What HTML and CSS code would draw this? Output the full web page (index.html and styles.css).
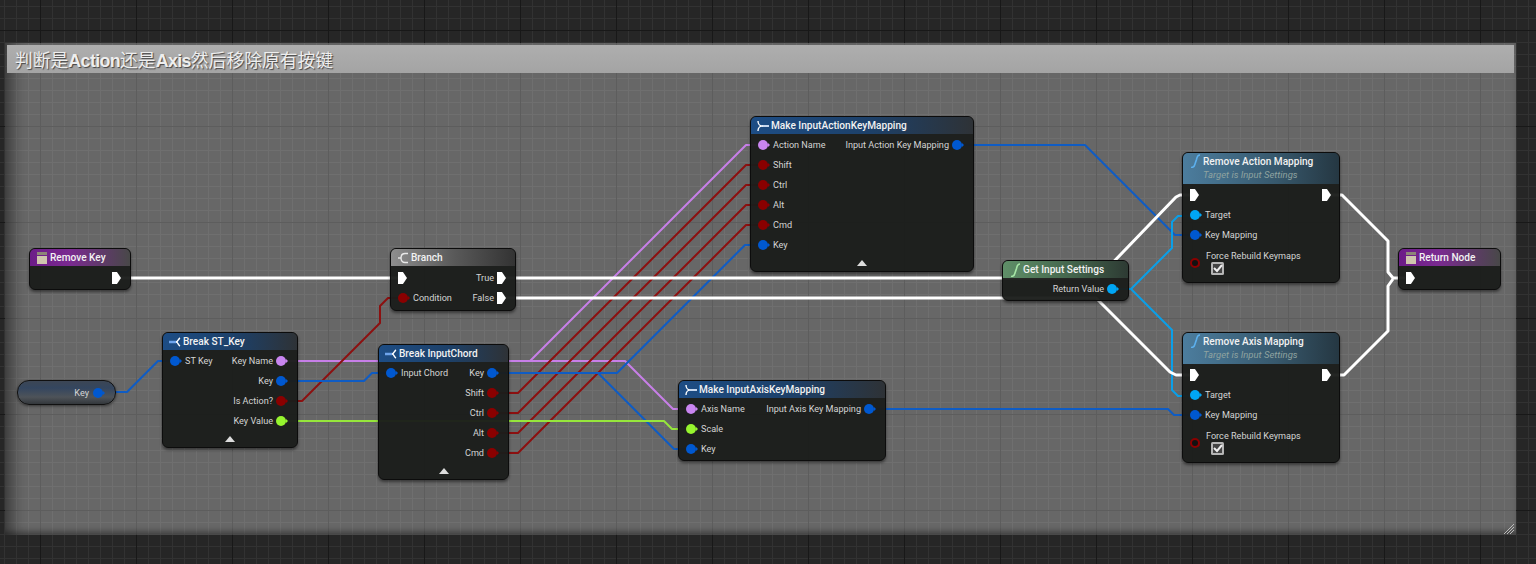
FILE: index.html
```html
<!DOCTYPE html>
<html lang="zh">
<head>
  <meta charset="UTF-8">
  <title>Blueprint</title>
  <link rel="stylesheet" href="styles.css">
</head>
<body>
  <div class="canvas">
    <div class="comment">
      <div class="comment-title">判断是<b>Action</b>还是<b>Axis</b>然后移除原有按键</div>
      <svg class="grip" width="10" height="10" viewBox="0 0 10 10"><path d="M0 10L10 0M3 10L10 3M6 10L10 6" stroke="#bbb" stroke-width="1"/></svg>
    </div>

    <svg class="wires" width="1536" height="564" viewBox="0 0 1536 564" fill="none" stroke-linejoin="round">
      <!-- data wires -->
      <g stroke-width="2">
        <path stroke="#c77fe8" d="M281 361H625L673 409H691"/>
        <path stroke="#c77fe8" d="M530 361L746 145H763"/>
        <path stroke="#8c1010" d="M281 401H302L380 323V306L388 298H402"/>
        <path stroke="#8c1010" d="M492 393H518L746 165H763"/>
        <path stroke="#8c1010" d="M492 413H518L746 185H763"/>
        <path stroke="#8c1010" d="M492 433H518L746 205H763"/>
        <path stroke="#8c1010" d="M492 453H518L746 225H763"/>
        <path stroke="#0f5cc4" d="M97 392H127L158 361H175"/>
        <path stroke="#0f5cc4" d="M281 381H364L372 373H391"/>
        <path stroke="#0f5cc4" d="M492 373H617L745 245H763"/>
        <path stroke="#0f5cc4" d="M598 373L674 449H691"/>
        <path stroke="#0f5cc4" d="M958 145H1085L1175 235H1194"/>
        <path stroke="#0f5cc4" d="M870 409H1168L1174 415H1194"/>
        <path stroke="#96e63c" d="M281 421H664L672 429H691"/>
        <path stroke="#0a9fe8" d="M1113 289H1131L1172 248V222L1178 216H1194"/>
        <path stroke="#0a9fe8" d="M1131 289L1172 330V390L1178 396H1194"/>
      </g>
      <!-- exec wires -->
      <g stroke="#fff" stroke-width="3">
        <path d="M118 278H398"/>
        <path d="M505 278H1098L1176 197L1180 195H1194"/>
        <path d="M505 298H1096L1170 372L1176 375H1194"/>
        <path d="M1327 195H1342L1388 241V272L1393 278H1405"/>
        <path d="M1327 375H1344L1388 331V286L1393 279"/>
      </g>
    </svg>

    <div class="node n-remove-key">
      <div class="head head-event">
        <svg class="icon" width="14" height="14" viewBox="0 0 14 14"><path fill="#8d8678" d="M2 1h10v3H2z"/><path fill="#cfc6ae" d="M2 5h10v8H2z"/></svg>
        <span class="title">Remove Key</span>
      </div>
      <div class="rows rows-wide">
        <div class="row"><span></span><span class="side"><i class="exec"></i></span></div>
      </div>
    </div>

    <div class="node n-branch">
      <div class="head head-grey">
        <svg class="icon" width="14" height="14" viewBox="0 0 14 14" fill="none" stroke="#e8e8e8" stroke-width="1.4"><path d="M12 2.500H9C6.500 2.500 5 4.500 5 7s1.500 4.500 4 4.500h3"/><path d="M5 7H2"/></svg>
        <span class="title">Branch</span>
      </div>
      <div class="rows rows-wide">
        <div class="row"><span class="side"><i class="exec"></i></span><span class="side"><span>True</span><i class="exec"></i></span></div>
        <div class="row"><span class="side"><i class="pin red"></i><span>Condition</span></span><span class="side"><span>False</span><i class="exec"></i></span></div>
      </div>
    </div>

    <div class="var n-key">
      <span>Key</span><i class="pin blue"></i>
    </div>

    <div class="node n-break-key">
      <div class="head head-struct">
        <svg class="icon" width="14" height="14" viewBox="0 0 14 14" fill="none"><path stroke="#6ea4ec" stroke-width="2.500" d="M1 7h7"/><path stroke="#fff" stroke-width="1.400" d="M8 7c2 0 2-3 4-4M8 7c2 0 2 3 4 4"/></svg>
        <span class="title">Break ST_Key</span>
      </div>
      <div class="rows">
        <div class="row"><span class="side"><i class="pin blue"></i><span>ST Key</span></span><span class="side"><span>Key Name</span><i class="pin pink"></i></span></div>
        <div class="row"><span></span><span class="side"><span>Key</span><i class="pin blue"></i></span></div>
        <div class="row"><span></span><span class="side"><span>Is Action?</span><i class="pin red"></i></span></div>
        <div class="row"><span></span><span class="side"><span>Key Value</span><i class="pin green"></i></span></div>
      </div>
      <div class="expand"></div>
    </div>

    <div class="node n-break-chord">
      <div class="head head-struct">
        <svg class="icon" width="14" height="14" viewBox="0 0 14 14" fill="none"><path stroke="#6ea4ec" stroke-width="2.500" d="M1 7h7"/><path stroke="#fff" stroke-width="1.400" d="M8 7c2 0 2-3 4-4M8 7c2 0 2 3 4 4"/></svg>
        <span class="title">Break InputChord</span>
      </div>
      <div class="rows">
        <div class="row"><span class="side"><i class="pin blue"></i><span>Input Chord</span></span><span class="side"><span>Key</span><i class="pin blue"></i></span></div>
        <div class="row"><span></span><span class="side"><span>Shift</span><i class="pin red"></i></span></div>
        <div class="row"><span></span><span class="side"><span>Ctrl</span><i class="pin red"></i></span></div>
        <div class="row"><span></span><span class="side"><span>Alt</span><i class="pin red"></i></span></div>
        <div class="row"><span></span><span class="side"><span>Cmd</span><i class="pin red"></i></span></div>
      </div>
      <div class="expand"></div>
    </div>

    <div class="node n-make-action">
      <div class="head head-struct">
        <svg class="icon" width="14" height="14" viewBox="0 0 14 14" fill="none"><path stroke="#fff" stroke-width="1.400" d="M2 2c0 3 2 5 4 5M2 12c0-3 2-5 4-5"/><path stroke="#dbe8fb" stroke-width="1.800" d="M6 7h7"/></svg>
        <span class="title">Make InputActionKeyMapping</span>
      </div>
      <div class="rows">
        <div class="row"><span class="side"><i class="pin pink"></i><span>Action Name</span></span><span class="side"><span>Input Action Key Mapping</span><i class="pin blue"></i></span></div>
        <div class="row"><span class="side"><i class="pin red"></i><span>Shift</span></span></div>
        <div class="row"><span class="side"><i class="pin red"></i><span>Ctrl</span></span></div>
        <div class="row"><span class="side"><i class="pin red"></i><span>Alt</span></span></div>
        <div class="row"><span class="side"><i class="pin red"></i><span>Cmd</span></span></div>
        <div class="row"><span class="side"><i class="pin blue"></i><span>Key</span></span></div>
      </div>
      <div class="expand"></div>
    </div>

    <div class="node n-make-axis">
      <div class="head head-struct">
        <svg class="icon" width="14" height="14" viewBox="0 0 14 14" fill="none"><path stroke="#fff" stroke-width="1.400" d="M2 2c0 3 2 5 4 5M2 12c0-3 2-5 4-5"/><path stroke="#dbe8fb" stroke-width="1.800" d="M6 7h7"/></svg>
        <span class="title">Make InputAxisKeyMapping</span>
      </div>
      <div class="rows">
        <div class="row"><span class="side"><i class="pin pink"></i><span>Axis Name</span></span><span class="side"><span>Input Axis Key Mapping</span><i class="pin blue"></i></span></div>
        <div class="row"><span class="side"><i class="pin green"></i><span>Scale</span></span></div>
        <div class="row"><span class="side"><i class="pin blue"></i><span>Key</span></span></div>
      </div>
    </div>

    <div class="node n-get-settings">
      <div class="head head-pure">
        <svg class="icon" width="14" height="14" viewBox="0 0 14 14" fill="none" stroke="#a6e6a6" stroke-width="1.600"><path d="M12 1C9.500 1 9 2.500 8.500 5.500L7 10C6.500 12.500 5 13.500 3 13.500"/></svg>
        <span class="title">Get Input Settings</span>
      </div>
      <div class="rows">
        <div class="row"><span></span><span class="side"><span>Return Value</span><i class="pin cyan"></i></span></div>
      </div>
    </div>

    <div class="node n-remove-action">
      <div class="head head-func">
        <div class="head-line">
          <svg class="icon" width="14" height="14" viewBox="0 0 14 14" fill="none" stroke="#5cb0ee" stroke-width="1.600"><path d="M12 1C9.500 1 9 2.500 8.500 5.500L7 10C6.500 12.500 5 13.500 3 13.500"/></svg>
          <span class="title">Remove Action Mapping</span>
        </div>
        <div class="subtitle">Target is Input Settings</div>
      </div>
      <div class="rows">
        <div class="row"><span class="side"><i class="exec"></i></span><span class="side"><i class="exec"></i></span></div>
        <div class="row"><span class="side"><i class="pin cyan"></i><span>Target</span></span></div>
        <div class="row"><span class="side"><i class="pin blue"></i><span>Key Mapping</span></span></div>
        <div class="row row-force">
          <span class="side"><i class="pin open"></i>
            <span class="force"><span>Force Rebuild Keymaps</span>
              <svg class="check" width="13" height="13" viewBox="0 0 13 13"><rect width="13" height="13" rx="1.500" fill="#b5b5b5"/><rect x="2" y="2" width="9" height="9" fill="#444"/><path d="M3 6l3 3 5-6" fill="none" stroke="#eee" stroke-width="2"/></svg>
            </span>
          </span>
        </div>
      </div>
    </div>

    <div class="node n-remove-axis">
      <div class="head head-func">
        <div class="head-line">
          <svg class="icon" width="14" height="14" viewBox="0 0 14 14" fill="none" stroke="#5cb0ee" stroke-width="1.600"><path d="M12 1C9.500 1 9 2.500 8.500 5.500L7 10C6.500 12.500 5 13.500 3 13.500"/></svg>
          <span class="title">Remove Axis Mapping</span>
        </div>
        <div class="subtitle">Target is Input Settings</div>
      </div>
      <div class="rows">
        <div class="row"><span class="side"><i class="exec"></i></span><span class="side"><i class="exec"></i></span></div>
        <div class="row"><span class="side"><i class="pin cyan"></i><span>Target</span></span></div>
        <div class="row"><span class="side"><i class="pin blue"></i><span>Key Mapping</span></span></div>
        <div class="row row-force">
          <span class="side"><i class="pin open"></i>
            <span class="force"><span>Force Rebuild Keymaps</span>
              <svg class="check" width="13" height="13" viewBox="0 0 13 13"><rect width="13" height="13" rx="1.500" fill="#b5b5b5"/><rect x="2" y="2" width="9" height="9" fill="#444"/><path d="M3 6l3 3 5-6" fill="none" stroke="#eee" stroke-width="2"/></svg>
            </span>
          </span>
        </div>
      </div>
    </div>

    <div class="node n-return">
      <div class="head head-event">
        <svg class="icon" width="14" height="14" viewBox="0 0 14 14"><path fill="#8d8678" d="M2 1h10v3H2z"/><path fill="#cfc6ae" d="M2 5h10v8H2z"/></svg>
        <span class="title">Return Node</span>
      </div>
      <div class="rows rows-wide">
        <div class="row"><span class="side"><i class="exec"></i></span></div>
      </div>
    </div>
  </div>
</body>
</html>
```

FILE: styles.css
```css
html, body {
  margin: 0;
  padding: 0;
  background-color: #262626;
}
.canvas {
  position: relative;
  width: 1536px;
  height: 564px;
  overflow: hidden;
  font-family: Roboto, sans-serif;
  font-size: 9.1px;
  color: #d4d4d4;
  background-color: #262626;
  background-image:
    linear-gradient(to right, #181818 1px, transparent 1px),
    linear-gradient(to bottom, #181818 1px, transparent 1px),
    linear-gradient(to right, #323232 1px, transparent 1px),
    linear-gradient(to bottom, #323232 1px, transparent 1px);
  background-size: 96px 96px, 96px 96px, 12px 12px, 12px 12px;
  background-position: 40px 0, 0 30px, 4px 0, 0 6px;
}

/* comment box */
.comment {
  position: absolute;
  left: 5px;
  top: 43px;
  width: 1511px;
  height: 492px;
  padding: 2px;
  box-sizing: border-box;
  background-color: rgba(255,255,255,0.3);
  box-shadow: inset 16px 0 14px -8px rgba(0,0,0,0.4), inset 0 -6px 6px -3px rgba(0,0,0,0.4);
}
.comment-title {
  height: 28px;
  line-height: 28px;
  padding-left: 8px;
  font-family: "Noto Sans CJK SC", Roboto, sans-serif;
  font-size: 17.8px;
  color: #eee;
  text-shadow: 1px 1px 1px #444;
  background: linear-gradient(to bottom, #aeaeae, #a4a4a4);
}
.comment-title b {
  font-family: "Liberation Sans", sans-serif;
  font-weight: bold;
  letter-spacing: -0.6px;
}
.grip {
  position: absolute;
  right: 2px;
  bottom: 1px;
}
.wires {
  position: absolute;
  left: 0;
  top: 0;
}

/* nodes */
.node {
  position: absolute;
  box-sizing: border-box;
  border: 1px solid #0c0c0c;
  border-radius: 6px;
  background-color: rgba(27,29,27,0.96);
  box-shadow: 0 2px 3px rgba(0,0,0,0.45);
}
.head {
  display: flex;
  align-items: center;
  height: 17px;
  padding-left: 5px;
  border-radius: 5px 5px 0 0;
}
.head-event { background: linear-gradient(to right, #6c1c88 0%, #7a2a90 40%, #484848 100%); }
.head-grey { background: linear-gradient(to right, #8e8e8e, #5a5a5a 50%, #333); }
.head-struct { background: linear-gradient(to right, #1d4d85, #1d4068 55%, #2e3236); }
.head-pure { background: linear-gradient(to right, #5f8f68, #41614a 60%, #2d3a33); }
.head-func {
  display: block;
  height: 31px;
  box-sizing: border-box;
  background: linear-gradient(to right, #4c7d9e, #37586c 60%, #253742);
}
.head-line {
  display: flex;
  align-items: center;
  height: 16px;
}
.icon {
  flex: none;
  margin-right: 1px;
}
.title {
  font-weight: 500;
  font-size: 10.1px;
  color: #f2f2f2;
  white-space: nowrap;
}
.subtitle {
  padding-left: 15px;
  font-style: italic;
  font-size: 9.5px;
  line-height: 12px;
  color: #8fa3a0;
  white-space: nowrap;
}
.rows { padding-top: 1px; }
.rows-wide { padding-top: 2px; }
.row {
  display: flex;
  justify-content: space-between;
  align-items: center;
  height: 20px;
  padding: 0 11px 0 7px;
  white-space: nowrap;
}
.row-force {
  align-items: flex-start;
  height: 36px;
  padding-top: 1px;
  box-sizing: border-box;
}
.side {
  display: flex;
  align-items: center;
  gap: 5px;
}
.row > * + .side { gap: 3px; }
.force {
  display: flex;
  flex-direction: column;
}
.force > span {
  line-height: 20px;
}
.check {
  margin-top: -4px;
  margin-left: 5px;
}
.row-force .pin { margin-top: 4px; margin-right: 1px; }

/* pins */
.pin {
  position: relative;
  flex: none;
  display: block;
  width: 10px;
  height: 10px;
  border-radius: 50%;
  background-color: currentColor;
}
.pin::after {
  content: "";
  position: absolute;
  right: -2px;
  top: 3px;
  border-left: 2px solid currentColor;
  border-top: 2px solid transparent;
  border-bottom: 2px solid transparent;
}
.pin.blue { color: #0058d0; }
.pin.red { color: #8a0000; }
.pin.pink { color: #c985f0; }
.pin.green { color: #96f52e; }
.pin.cyan { color: #00a6f5; }
.pin.open {
  box-sizing: border-box;
  color: #8a0000;
  border: 2px solid currentColor;
  background-color: #111;
}
.exec {
  flex: none;
  display: block;
  width: 9px;
  height: 12px;
  background-color: #fff;
  clip-path: polygon(0 0, 55% 0, 100% 50%, 55% 100%, 0 100%);
}
.row > * + .side .exec { margin-right: -2px; }
.expand {
  position: relative;
  height: 15px;
}
.expand::after {
  content: "";
  position: absolute;
  left: 50%;
  top: 5px;
  margin-left: -5px;
  border-left: 5px solid transparent;
  border-right: 5px solid transparent;
  border-bottom: 6px solid #ddd;
}

/* variable getter */
.var {
  position: absolute;
  box-sizing: border-box;
  display: flex;
  justify-content: flex-end;
  align-items: center;
  gap: 4px;
  padding-right: 12px;
  border: 1px solid #111;
  border-radius: 12px;
  background: linear-gradient(to bottom, #3c4654 0%, #34465f 30%, #4e5359 70%, #33373b 100%);
  box-shadow: 0 1px 3px rgba(0,0,0,0.5);
}

/* node places on the graph */
.n-remove-key { left: 29px; top: 248px; width: 102px; height: 42px; }
.n-branch { left: 390px; top: 248px; width: 126px; height: 63px; }
.n-key { left: 17px; top: 380px; width: 99px; height: 25px; }
.n-break-key { left: 162px; top: 332px; width: 136px; height: 116px; }
.n-break-chord { left: 378px; top: 344px; width: 131px; height: 136px; }
.n-make-action { left: 750px; top: 116px; width: 224px; height: 156px; }
.n-make-axis { left: 678px; top: 380px; width: 208px; height: 81px; }
.n-get-settings { left: 1002px; top: 260px; width: 127px; height: 41px; }
.n-remove-action { left: 1182px; top: 152px; width: 158px; height: 131px; }
.n-remove-axis { left: 1182px; top: 332px; width: 158px; height: 131px; }
.n-return { left: 1398px; top: 248px; width: 103px; height: 42px; }
.n-remove-action .row, .n-remove-axis .row { padding-right: 10px; }
```
